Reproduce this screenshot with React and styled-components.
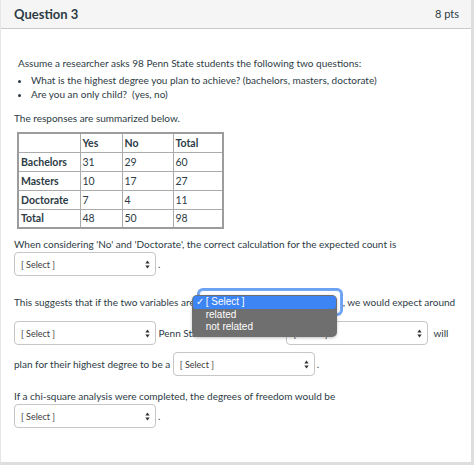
import React from "react";
import styled, { createGlobalStyle, css } from "styled-components";

const Global = createGlobalStyle`
  html, body { margin: 0; padding: 0; background: #fff; }
  body { font-family: Lato, "Noto Sans", sans-serif; color: #2d3b45; }
  * { box-sizing: border-box; }
`;

const Card = styled.div`
  width: 474px;
  height: 465px;
  border-left: 1px solid #e6e6e6;
  border-right: 3px solid #dedede;
  border-bottom: 3px solid #dedede;
  background: #fff;
  display: flex;
  flex-direction: column;
`;

const Header = styled.header`
  height: 29px;
  flex: none;
  background: #f5f5f5;
  border-bottom: 1px solid #c9c9c9;
  display: flex;
  align-items: center;
  justify-content: space-between;
  padding: 0 12px 1px 13px;
`;

const Title = styled.h2`
  margin: 0;
  font-size: 13px;
  font-weight: 700;
  color: #2d3b45;
`;

const Points = styled.span`
  font-size: 11px;
  color: #2d3b45;
`;

const Body = styled.div`
  display: flex;
  flex-direction: column;
  align-items: flex-start;
  padding: 26px 10px 0 13px;
  font-size: 10px;
`;

const Text = styled.p`
  margin: ${(p) => p.$mt || 0}px 0 0 ${(p) => p.$indent || 0}px;
  line-height: 16px;
  white-space: nowrap;
  font-size: 10px;
`;

const List = styled.ul`
  margin: 2px 0 0;
  padding-left: 17px;
  line-height: 14px;
  list-style: disc;
  font-size: 10px;
`;

const Table = styled.table`
  margin: 6px 0 0 3px;
  width: 205px;
  table-layout: fixed;
  border-collapse: collapse;
  border: 2px solid #9c9c9c;
  font-size: 10.5px;
  color: #2d3b45;
`;

const Row = styled.tr`
  height: 19px;
`;

const Cell = styled.td`
  border: 1px solid #ababab;
  padding: 0 2px;
  font-weight: ${(p) => (p.$bold ? 700 : 400)};
  line-height: 14px;
  white-space: nowrap;
`;

const Para = styled.div`
  display: flex;
  flex-direction: column;
  gap: ${(p) => p.$gap || 0}px;
  margin-top: ${(p) => p.$mt || 0}px;
`;

const Line = styled.div`
  display: flex;
  align-items: center;
  height: ${(p) => p.$h || 16}px;
  white-space: pre;
  font-size: 10px;
`;

const Gap = styled.span`
  display: inline-block;
  width: ${(p) => p.$w}px;
`;

const SelectBox = styled.div`
  position: relative;
  flex: none;
  width: 142px;
  height: 24px;
  border: 1px solid #c6c6c6;
  border-radius: 4px;
  background: #fff;
  display: flex;
  align-items: center;
  justify-content: space-between;
  padding: 0 5px 0 6px;
  font-size: 9px;
  color: #3b3b3b;
  ${(p) =>
    p.$focused &&
    css`
      border-color: #78a9f2;
      box-shadow: 0 0 0 2px #6aa2f4;
    `}
`;

const Menu = styled.div`
  position: absolute;
  z-index: 10;
  left: -8px;
  top: 4px;
  width: 145px;
  height: 42px;
  background: #6f6f6f;
  border-radius: 5px;
  padding: 1px;
  font-family: "Liberation Sans", Arial, sans-serif;
  font-size: 10px;
  color: #fff;
  box-shadow: 0 1px 3px rgba(0, 0, 0, 0.25);
`;

const MenuItem = styled.div`
  position: relative;
  height: 12.5px;
  line-height: 12.5px;
  padding-left: 13px;
  border-radius: 3px;
  ${(p) =>
    p.$active &&
    css`
      background: #3d84f5;
    `}
`;

const Check = styled.span`
  position: absolute;
  left: 3px;
  top: 0;
`;

const Arrows = () => (
  <svg width="5" height="9" viewBox="0 0 5 9">
    <polygon points="0.3,3.6 2.5,0.4 4.7,3.6" fill="#333" />
    <polygon points="0.3,5.4 4.7,5.4 2.5,8.6" fill="#333" />
  </svg>
);

const Select = ({ focused, children }) => (
  <SelectBox $focused={focused}>
    <span>{focused ? "" : "[ Select ]"}</span>
    <Arrows />
    {children}
  </SelectBox>
);

const rows = [
  ["Bachelors", "31", "29", "60"],
  ["Masters", "10", "17", "27"],
  ["Doctorate", "7", "4", "11"],
  ["Total", "48", "50", "98"],
];
const widths = [62, 42, 51, 50];

export default function App() {
  return (
    <>
      <Global />
      <Card>
        <Header>
          <Title>Question 3</Title>
          <Points>8 pts</Points>
        </Header>
        <Body>
          <Text $indent={4}>
            Assume a researcher asks 98 Penn State students the following two questions:
          </Text>
          <List>
            <li>What is the highest degree you plan to achieve? (bachelors, masters, doctorate)</li>
            <li>Are you an only child?&nbsp; (yes, no)</li>
          </List>
          <Text $mt={9}>The responses are summarized below.</Text>
          <Table>
            <colgroup>
              {widths.map((w, i) => (
                <col key={i} style={{ width: w }} />
              ))}
            </colgroup>
            <tbody>
              <Row>
                <Cell />
                <Cell $bold>Yes</Cell>
                <Cell $bold>No</Cell>
                <Cell $bold>Total</Cell>
              </Row>
              {rows.map((r) => (
                <Row key={r[0]}>
                  {r.map((c, i) => (
                    <Cell key={i} $bold={i === 0}>
                      {c}
                    </Cell>
                  ))}
                </Row>
              ))}
            </tbody>
          </Table>
          <Para $mt={7}>
            <Line>
              When considering 'No' and 'Doctorate', the correct calculation for the expected count is
            </Line>
            <Line $h={24}>
              <Select />
              <Gap $w={2} />.
            </Line>
          </Para>
          <Para $mt={14} $gap={7}>
            <Line $h={24}>
              This suggests that if the two variables are
              <Gap $w={4} />
              <Select focused>
                <Menu>
                  <MenuItem $active>
                    <Check>✓</Check>[ Select ]
                  </MenuItem>
                  <MenuItem>related</MenuItem>
                  <MenuItem>not related</MenuItem>
                </Menu>
              </Select>
              <Gap $w={2} />, we would expect around
            </Line>
            <Line $h={24}>
              <Select />
              {" Penn State students who are "}
              <Select />
              <Gap $w={5} />will
            </Line>
            <Line $h={24}>
              {"plan for their highest degree to be a "}
              <Select />
              <Gap $w={2} />.
            </Line>
          </Para>
          <Para $mt={12}>
            <Line>If a chi-square analysis were completed, the degrees of freedom would be</Line>
            <Line $h={24}>
              <Select />
              <Gap $w={2} />.
            </Line>
          </Para>
        </Body>
      </Card>
    </>
  );
}
